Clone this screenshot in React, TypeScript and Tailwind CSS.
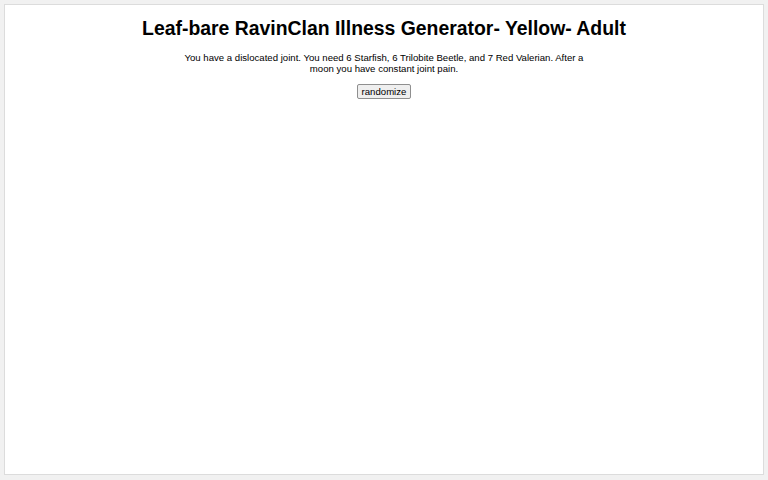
export default function App() {
  return (
    <div className="min-h-[480px] bg-[#f1f1f1] p-[4px] font-['Liberation_Sans',Arial,sans-serif] text-black">
      <div className="h-[471px] border border-[#dcdcdc] bg-white flex flex-col items-center">
        <h1 className="mt-[11px] text-[19.4px] leading-[24px] font-bold">
          Leaf-bare RavinClan Illness Generator- Yellow- Adult
        </h1>
        <p className="mt-[12px] w-[404px] text-center text-[9.6px] leading-[11px]">
          You have a dislocated joint. You need 6 Starfish, 6 Trilobite Beetle, and 7 Red Valerian. After a moon you have constant joint pain.
        </p>
        <button className="mt-[10px] border border-[#8f8f8f] rounded-[2px] bg-[#efefef] px-[4px] text-[9.6px] leading-[13px]">
          randomize
        </button>
      </div>
    </div>
  );
}
